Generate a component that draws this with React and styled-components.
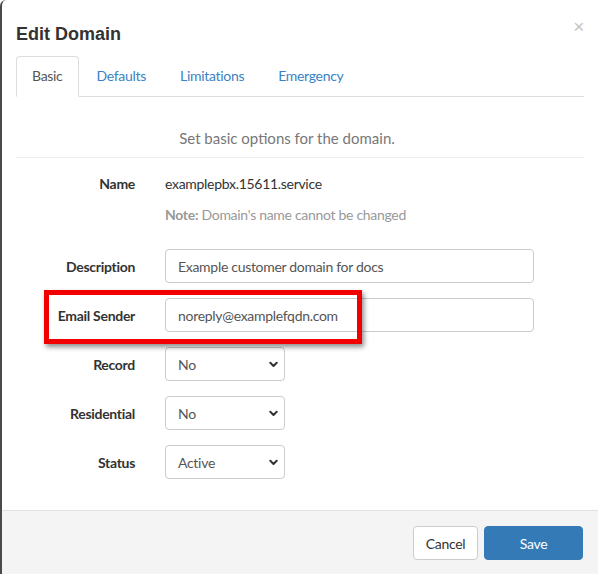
import React from 'react';
import styled, { createGlobalStyle } from 'styled-components';

const GlobalStyle = createGlobalStyle`
  html, body {
    margin: 0;
    padding: 0;
    background: #ffffff;
  }
  * {
    box-sizing: border-box;
  }
`;

const rows = [
  { label: 'Description', kind: 'input', value: 'Example customer domain for docs' },
  { label: 'Email Sender', kind: 'input', value: 'noreply@examplefqdn.com' },
  { label: 'Record', kind: 'select', value: 'No', options: ['No', 'Yes'] },
  { label: 'Residential', kind: 'select', value: 'No', options: ['No', 'Yes'] },
  { label: 'Status', kind: 'select', value: 'Active', options: ['Active', 'Inactive'] },
];

const tabs = ['Basic', 'Defaults', 'Limitations', 'Emergency'];

const Chevron = () => (
  <svg width="9" height="7" viewBox="0 0 9 7">
    <path d="M1.3 1.8 L4.5 5 L7.7 1.8" fill="none" stroke="#333" strokeWidth="2" strokeLinecap="round" strokeLinejoin="round" />
  </svg>
);

const App = () => {
  return (
    <>
      <GlobalStyle />
      <Modal>
        <Header>
          <Title>Edit Domain</Title>
          <Close>×</Close>
        </Header>

        <TabBar>
          {tabs.map((t, i) => (
            <Tab key={t} $active={i === 0}>{t}</Tab>
          ))}
        </TabBar>

        <Body>
          <HelpText>Set basic options for the domain.</HelpText>
          <Divider />

          <StaticRow>
            <Label>Name</Label>
            <StaticValue>examplepbx.15611.service</StaticValue>
          </StaticRow>
          <NoteRow>
            <span />
            <Note><b>Note:</b> Domain's name cannot be changed</Note>
          </NoteRow>

          <Fields>
            {rows.map((r) => (
              <FieldRow key={r.label}>
                <Label>{r.label}</Label>
                {r.kind === 'input' ? (
                  <TextInput defaultValue={r.value} />
                ) : (
                  <SelectWrap>
                    <Select defaultValue={r.value}>
                      {r.options.map((o) => (
                        <option key={o}>{o}</option>
                      ))}
                    </Select>
                    <SelectArrow>
                      <Chevron />
                    </SelectArrow>
                  </SelectWrap>
                )}
              </FieldRow>
            ))}
            <Highlight />
          </Fields>
        </Body>

        <Footer>
          <CancelButton>Cancel</CancelButton>
          <SaveButton>Save</SaveButton>
        </Footer>
      </Modal>
    </>
  );
};

export default App;

const uiFont = `'Lato', 'Open Sans', sans-serif`;

const Modal = styled.div`
  width: 598px;
  height: 574px;
  display: flex;
  flex-direction: column;
  background: #fff;
  border-left: 2px solid #4a4a4a;
  border-top-left-radius: 6px;
  font-family: ${uiFont};
  font-size: 14px;
  letter-spacing: -0.3px;
  color: #333;
`;

const Header = styled.div`
  display: flex;
  justify-content: space-between;
  align-items: flex-start;
  padding: 24px 14px 0 14px;
`;

const Title = styled.h4`
  margin: 0;
  font-family: 'Liberation Sans', Arial, sans-serif;
  font-size: 18px;
  font-weight: bold;
  line-height: 20px;
  letter-spacing: 0;
  color: #333;
`;

const Close = styled.span`
  margin-top: -7px;
  font-family: 'Liberation Sans', Arial, sans-serif;
  font-size: 19px;
  line-height: 20px;
  color: #c4c4c4;
`;

const TabBar = styled.div`
  display: flex;
  gap: 2px;
  margin: 12px 14px 0 14px;
  border-bottom: 1px solid #dddddd;
`;

const Tab = styled.a`
  display: flex;
  align-items: center;
  height: 41px;
  margin-bottom: -1px;
  padding: 0 15px 2px;
  border: 1px solid ${(p) => (p.$active ? '#dddddd' : 'transparent')};
  border-bottom-color: ${(p) => (p.$active ? '#fff' : 'transparent')};
  border-radius: 4px 4px 0 0;
  background: ${(p) => (p.$active ? '#fff' : 'transparent')};
  color: ${(p) => (p.$active ? '#555' : '#3a82c4')};
  cursor: pointer;
`;

const Body = styled.div`
  flex: 1;
  padding: 0 14px;
`;

const HelpText = styled.p`
  margin: 31px 26px 0 0;
  font-size: 15px;
  letter-spacing: 0;
  line-height: 20px;
  text-align: center;
  color: #777;
`;

const Divider = styled.hr`
  margin: 9px 0 0;
  border: 0;
  border-top: 1px solid #eeeeee;
`;

const formGrid = `
  display: grid;
  grid-template-columns: 119px 1fr;
  column-gap: 30px;
  align-items: center;
`;

const StaticRow = styled.div`
  ${formGrid}
  margin-top: 16px;
  line-height: 20px;
`;

const NoteRow = styled.div`
  ${formGrid}
  margin-top: 11px;
  line-height: 20px;
`;

const Label = styled.label`
  text-align: right;
  font-weight: bold;
  color: #333;
`;

const StaticValue = styled.span`
  color: #333;
`;

const Note = styled.span`
  color: #999;
  b {
    font-weight: bold;
  }
`;

const Fields = styled.div`
  position: relative;
  display: flex;
  flex-direction: column;
  gap: 15px;
  margin-top: 24px;
`;

const FieldRow = styled.div`
  ${formGrid}
`;

const TextInput = styled.input`
  width: 369px;
  height: 34px;
  padding: 0 12px;
  border: 1px solid #cccccc;
  border-radius: 4px;
  font-family: ${uiFont};
  font-size: 14px;
  letter-spacing: -0.3px;
  color: #555;
  background: #fff;
  outline: none;
`;

const SelectWrap = styled.div`
  position: relative;
  width: 120px;
  height: 34px;
`;

const Select = styled.select`
  appearance: none;
  width: 100%;
  height: 100%;
  padding: 0 12px;
  border: 1px solid #cccccc;
  border-radius: 4px;
  font-family: ${uiFont};
  font-size: 14px;
  letter-spacing: -0.3px;
  color: #555;
  background: #fff;
  outline: none;
`;

const SelectArrow = styled.span`
  position: absolute;
  right: 7px;
  top: 14px;
  display: flex;
  pointer-events: none;
`;

const Highlight = styled.div`
  position: absolute;
  left: 28px;
  top: 41px;
  width: 318px;
  height: 54px;
  border: 5px solid #f20000;
  box-shadow: 2px 3px 5px rgba(0, 0, 0, 0.45);
  pointer-events: none;
`;

const Footer = styled.div`
  display: flex;
  justify-content: flex-end;
  gap: 6px;
  height: 64px;
  padding: 15px 15px 0 0;
  border-top: 1px solid #e2e2e2;
  background: #f4f4f4;
`;

const ButtonBase = styled.button`
  height: 34px;
  border-radius: 4px;
  font-family: ${uiFont};
  font-size: 14px;
  letter-spacing: -0.3px;
  cursor: pointer;
`;

const CancelButton = styled(ButtonBase)`
  width: 65px;
  border: 1px solid #cccccc;
  background: #fff;
  color: #333;
`;

const SaveButton = styled(ButtonBase)`
  width: 99px;
  border: 1px solid #337ab7;
  background: #337ab7;
  color: #fff;
`;
